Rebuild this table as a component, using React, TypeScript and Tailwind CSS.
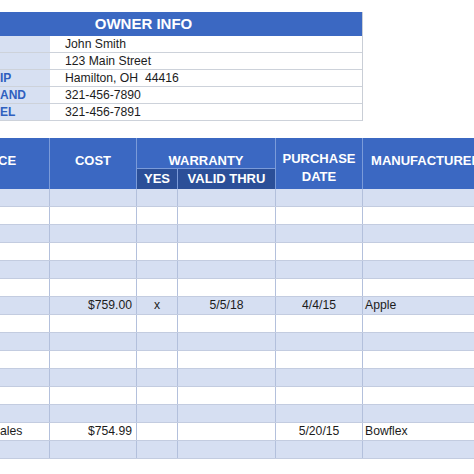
import React from 'react';

const owner = [
  { label: '', value: 'John Smith' },
  { label: '', value: '123 Main Street' },
  { label: 'IP', value: 'Hamilton, OH  44416' },
  { label: 'AND', value: '321-456-7890' },
  { label: 'EL', value: '321-456-7891' },
];

type Row = { item?: string; cost?: string; yes?: string; valid?: string; date?: string; maker?: string };

const rows: Row[] = [
  {}, {}, {}, {}, {}, {},
  { cost: '$759.00', yes: 'x', valid: '5/5/18', date: '4/4/15', maker: 'Apple' },
  {}, {}, {}, {}, {}, {},
  { item: 'ales', cost: '$754.99', date: '5/20/15', maker: 'Bowflex' },
  {},
];

const cols = 'grid grid-cols-[50px_87px_41px_98px_87px_126px] w-[489px]';

export default function App() {
  return (
    <div className="w-[474px] h-[474px] overflow-hidden bg-white pt-[12px] text-[#1c1c1c] font-['Liberation_Sans',Arial,sans-serif]">
      {/* owner info block */}
      <div className="w-[363px] border-r border-[#c9ced6]">
        <div className="h-[24px] bg-[#3b68c2] text-white font-bold text-[15px] flex items-center justify-center pr-[75px]">
          OWNER INFO
        </div>
        {owner.map((o, i) => (
          <div key={i} className="grid grid-cols-[50px_1fr] h-[17px] border-b border-[#cdd2da]">
            <div className="bg-[#d7e0f2] text-[#2f5fbf] font-bold text-[12px] leading-[16px] overflow-hidden whitespace-nowrap">
              {o.label}
            </div>
            <div className="pl-[15px] text-[12.2px] leading-[16px] whitespace-pre">{o.value}</div>
          </div>
        ))}
      </div>

      {/* inventory table */}
      <div className="mt-[17px]">
        <div className={`${cols} grid-rows-[31px_20px] bg-[#3b68c2] text-white font-bold text-[13px] leading-[17px]`}>
          <div className="row-span-2 border-r border-[#7b9bd9] pt-[14px] overflow-hidden whitespace-nowrap -indent-[2px]">CE</div>
          <div className="row-span-2 border-r border-[#7b9bd9] pt-[14px] text-center">COST</div>
          <div className="col-span-2 border-r border-b border-[#7b9bd9] pt-[14px] text-center">WARRANTY</div>
          <div className="row-span-2 border-r border-[#7b9bd9] pt-[12px] text-center leading-[18px]">
            PURCHASE<br />DATE
          </div>
          <div className="row-span-2 pt-[14px] text-center">MANUFACTURER</div>
          <div className="bg-[#2b4f98] border-r border-[#7b9bd9] text-center leading-[19px]">YES</div>
          <div className="bg-[#2b4f98] border-r border-[#7b9bd9] text-center leading-[19px]">VALID THRU</div>
        </div>

        {rows.map((r, i) => (
          <div
            key={i}
            className={`${cols} h-[18px] border-b border-[#c3cce0] text-[12.2px] leading-[17px] ${i % 2 === 0 ? 'bg-[#d6dff2]' : 'bg-white'}`}
          >
            <div className="border-r border-[#b3c0dc] overflow-hidden whitespace-nowrap">{r.item}</div>
            <div className="border-r border-[#b3c0dc] text-right pr-[4px]">{r.cost}</div>
            <div className="border-r border-[#b3c0dc] text-center">{r.yes}</div>
            <div className="border-r border-[#b3c0dc] text-center">{r.valid}</div>
            <div className="border-r border-[#b3c0dc] text-center">{r.date}</div>
            <div className="pl-[2px]">{r.maker}</div>
          </div>
        ))}
      </div>
    </div>
  );
}
